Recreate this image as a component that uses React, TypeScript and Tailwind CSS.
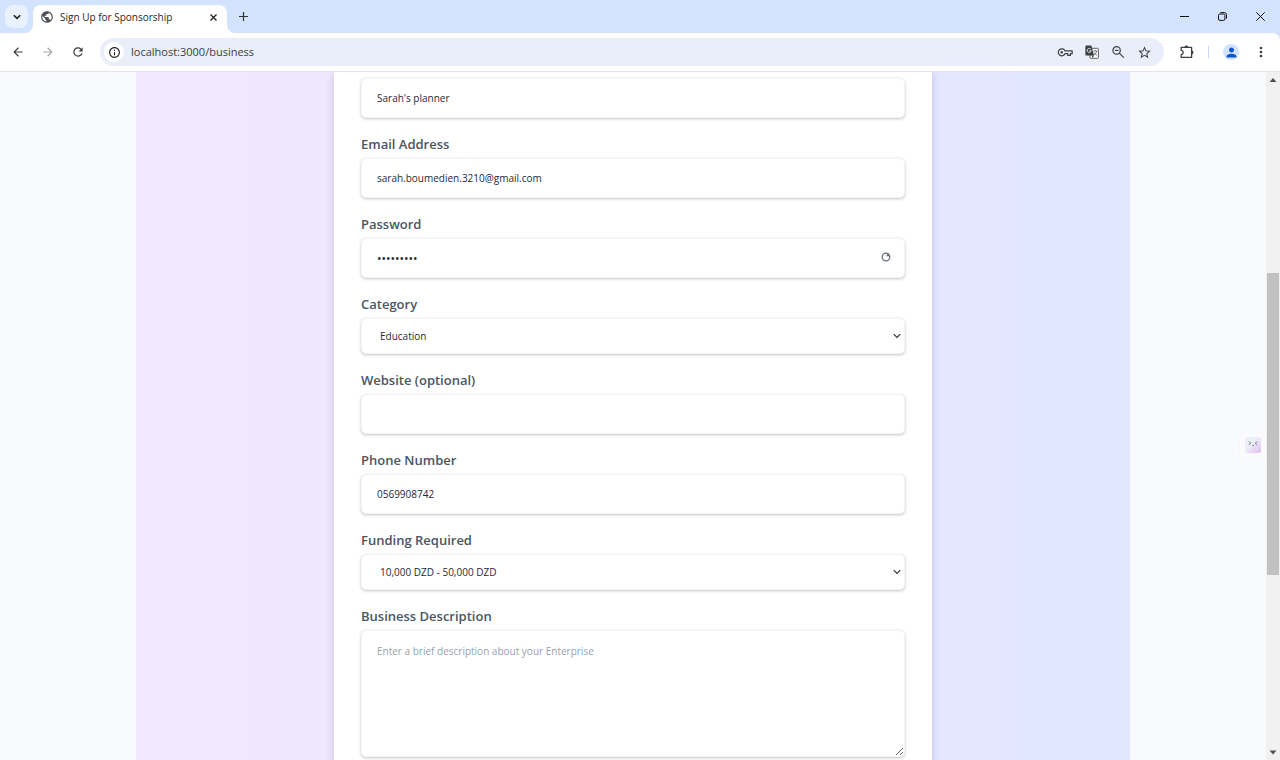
import { useState } from 'react';
import type { ReactNode } from 'react';
import { MdPublic, MdStarOutline, MdPerson, MdRefresh, MdArrowBack, MdArrowForward, MdMoreVert, MdInfoOutline } from 'react-icons/md';

const fieldClass =
  'block w-full rounded-[5px] border border-gray-100 bg-white text-gray-800 shadow-[0_1px_3px_rgba(0,0,0,0.24)] outline-none';

const fundingOptions = ['10,000 DZD - 50,000 DZD', '50,000 DZD - 100,000 DZD', 'Over 100,000 DZD'];
const categories = ['Education', 'Technology', 'Health', 'Arts'];

function Field({ id, label, children }: { id: string; label: string; children: ReactNode }) {
  return (
    <div className="mb-4">
      <label htmlFor={id} className="mb-1 block text-[13px] leading-5 font-semibold text-gray-600">
        {label}
      </label>
      {children}
    </div>
  );
}

function SelectBox({ id, value, options, onChange }: { id: string; value: string; options: string[]; onChange: (v: string) => void }) {
  return (
    <div className="relative">
      <select id={id} value={value} onChange={(e) => onChange(e.target.value)} className={`${fieldClass} h-9 appearance-none px-[18px] text-[10px]`}>
        {options.map((o) => (
          <option key={o}>{o}</option>
        ))}
      </select>
      <svg className="pointer-events-none absolute top-3.5 right-1 h-2 w-2" viewBox="0 0 8 8" fill="none" stroke="#333" strokeWidth="1.2">
        <path d="M0.7 2.2 4 5.5 7.3 2.2" />
      </svg>
    </div>
  );
}

function TitleBar() {
  return (
    <div className="flex h-[33px] shrink-0 items-stretch bg-[#d3e3fd] pl-[5px]">
      <button aria-label="Search tabs" className="mt-[5px] flex h-[23px] w-[23px] items-center justify-center rounded-lg bg-[#e9f1fe]">
        <svg className="h-2 w-2" viewBox="0 0 8 8" fill="none" stroke="#1f1f1f" strokeWidth="1.6">
          <path d="M0.8 2.3 4 5.4 7.2 2.3" />
        </svg>
      </button>
      <div className="relative mt-[5px] ml-[5px] flex w-[194px] items-center rounded-t-lg bg-white pr-1.5 pb-1 pl-[7px]">
        <svg className="absolute bottom-0 -left-2 h-2 w-2" viewBox="0 0 8 8" fill="#fff"><path d="M8 0V8H0A8 8 0 0 0 8 0Z" /></svg>
        <svg className="absolute -right-2 bottom-0 h-2 w-2" viewBox="0 0 8 8" fill="#fff"><path d="M0 0V8H8A8 8 0 0 1 0 0Z" /></svg>
        <MdPublic className="h-[14px] w-[14px] text-[#4d5156]" />
        <span className="ml-1.5 flex-1 text-[10px] whitespace-nowrap text-[#1f1f1f]">Sign Up for Sponsorship</span>
        <button aria-label="Close tab" className="flex h-4 w-4 items-center justify-center">
          <svg className="h-[7px] w-[7px]" viewBox="0 0 7 7" stroke="#1f1f1f" strokeWidth="1.3">
            <path d="M0.5 0.5 6.5 6.5M6.5 0.5 0.5 6.5" />
          </svg>
        </button>
      </div>
      <button aria-label="New tab" className="ml-1.5 flex w-5 items-center justify-center">
        <svg className="h-[9px] w-[9px]" viewBox="0 0 9 9" stroke="#333" strokeWidth="1.2">
          <path d="M4.5 0V9M0 4.5H9" />
        </svg>
      </button>
      <div className="ml-auto flex">
        <button aria-label="Minimize" className="flex w-[38px] items-center justify-center">
          <svg className="h-[9px] w-[9px]" viewBox="0 0 9 9" stroke="#111">
            <path d="M0 4.5H9" />
          </svg>
        </button>
        <button aria-label="Restore" className="flex w-[38px] items-center justify-center">
          <svg className="h-[9px] w-[9px]" viewBox="0 0 9 9" fill="none" stroke="#111">
            <rect x="0.5" y="2" width="6.4" height="6.4" rx="1.4" />
            <path d="M2.4 0.6H6.4Q8.5 0.6 8.5 2.7V6.6" />
          </svg>
        </button>
        <button aria-label="Close" className="flex w-[39px] items-center justify-center">
          <svg className="h-[9px] w-[9px]" viewBox="0 0 9 9" stroke="#111">
            <path d="M0.3 0.3 8.7 8.7M8.7 0.3 0.3 8.7" />
          </svg>
        </button>
      </div>
    </div>
  );
}

function Toolbar() {
  return (
    <div className="bg-[#d3e3fd]">
      <div className="flex h-[39px] items-center rounded-tr-lg border-b border-[#e6e4e4] bg-white px-[11px] text-[#3c4043]">
        <button aria-label="Back" className="mr-4"><MdArrowBack className="h-[14px] w-[14px]" /></button>
        <button aria-label="Forward" className="mr-4 text-[#a5a7aa]"><MdArrowForward className="h-[14px] w-[14px]" /></button>
        <button aria-label="Reload"><MdRefresh className="h-[14px] w-[14px]" /></button>
        <div className="ml-[15px] flex h-7 flex-1 items-center rounded-full bg-[#e9eef8] pr-3 pl-1">
          <span className="flex h-5 w-5 items-center justify-center rounded-full bg-white">
            <MdInfoOutline className="h-[13px] w-[13px] text-[#1f1f1f]" />
          </span>
          <input aria-label="Address" defaultValue="localhost:3000/business" className="ml-[7px] flex-1 bg-transparent text-[11px] text-[#3c4043] outline-none" />
          <div className="flex items-center gap-3">
            <button aria-label="Passwords">
              <svg className="h-[14px] w-4" viewBox="0 0 16 14" fill="none" stroke="#3c4043" strokeWidth="1.2">
                <path d="M8 5.9A3.5 3.5 0 1 0 8 8.7H10.8V10.4H13.4V8.7H15.2V5.9Z" strokeLinejoin="round" />
                <circle cx="4.7" cy="7.3" r="1.2" fill="#3c4043" stroke="none" />
              </svg>
            </button>
            <button aria-label="Translate">
              <svg className="h-[14px] w-[14px]" viewBox="0 0 14 14" fill="none">
                <rect x="5" y="3.3" width="8.4" height="10" rx="0.8" fill="#fff" stroke="#5f6368" />
                <path d="M8.4 6H12.4M10.4 5V6M11.8 6Q11 9 8.8 10.4M9 7.4Q10 9.4 12 10.4" stroke="#5f6368" strokeWidth="0.8" />
                <path d="M1.300 0.500H6.400L9 10.600H1.300Q0.400 10.600 0.400 9.700V1.400Q0.400 0.500 1.300 0.500Z" fill="#3c4043" />
                <path d="M5.900 4.300A2 2 0 1 0 6.200 5.800H4.400" stroke="#fff" strokeWidth="0.9" />
                <path d="M6.500 10.600H9L7.800 13Z" fill="#3c4043" />
              </svg>
            </button>
            <button aria-label="Zoom">
              <svg className="h-[14px] w-[14px]" viewBox="0 0 14 14" fill="none" stroke="#3c4043" strokeWidth="1.2">
                <circle cx="5.6" cy="5.4" r="3.7" />
                <path d="M8.3 8.1 12.8 12.6M3.8 5.4H7.4" />
              </svg>
            </button>
            <button aria-label="Bookmark"><MdStarOutline className="h-[15px] w-[15px]" /></button>
          </div>
        </div>
        <button aria-label="Extensions" className="ml-4">
          <svg className="h-[14px] w-[14px]" viewBox="0 0 14 14" fill="none" stroke="#3c4043" strokeWidth="1.3" strokeLinejoin="round">
            <path d="M1.2 2.4H11.6V12.4H1.2V9.6Q3.2 9.2 3.2 7.4T1.2 5.2Z" />
            <path d="M5.2 2A1.3 1.3 0 0 1 7.6 2ZM12 6.2A1.3 1.3 0 0 1 12 8.6Z" fill="#3c4043" />
          </svg>
        </button>
        <span className="mx-[14px] h-3 w-px bg-[#c6d8f8]" />
        <button aria-label="Profile" className="flex h-4 w-4 items-center justify-center rounded-full bg-[#d3e3fd]">
          <MdPerson className="h-[15px] w-[15px] text-[#0b57d0]" />
        </button>
        <button aria-label="Menu" className="ml-[14px]"><MdMoreVert className="h-4 w-4" /></button>
      </div>
    </div>
  );
}

function Scrollbar() {
  return (
    <div className="flex w-[14px] shrink-0 flex-col items-center bg-[#f1f1f1]">
      <svg className="h-4 w-2" viewBox="0 0 8 16" fill="#505050"><path d="M0.5 10 4 6 7.5 10Z" /></svg>
      <div className="flex-[185]" />
      <div className="w-3 flex-[302] bg-[#c1c1c1]" />
      <div className="flex-[169]" />
      <svg className="h-4 w-2" viewBox="0 0 8 16" fill="#505050"><path d="M0.5 6.5 4 10.5 7.5 6.5Z" /></svg>
    </div>
  );
}

export default function App() {
  const [form, setForm] = useState({
    name: "Sarah's planner",
    email: 'sarah.boumedien.3210@gmail.com',
    password: 'planner12',
    category: 'Education',
    website: '',
    phone: '0569908742',
    funding: '10,000 DZD - 50,000 DZD',
    description: '',
  });
  const update = (key: string, value: string) => setForm({ ...form, [key]: value });

  return (
    <div className="flex h-screen flex-col overflow-hidden font-['Open_Sans','Noto_Sans',sans-serif]">
      <TitleBar />
      <Toolbar />
      <div className="relative flex min-h-0 flex-1">
        <main className="flex flex-1 justify-center overflow-hidden bg-[#f8fafb]">
          <div className="flex w-full max-w-[994px] justify-center bg-gradient-to-r from-purple-100 to-indigo-100">
            <form className="h-max min-h-full w-full max-w-[598px] bg-white px-[27px] pt-1.5 pb-8 shadow-[0_2px_8px_rgba(60,50,120,0.22)]">
              <div className="mb-4">
                <input aria-label="Business Name" value={form.name} onChange={(e) => update('name', e.target.value)} className={`${fieldClass} h-10 px-[15px] text-[10px]`} />
              </div>
              <Field id="email" label="Email Address">
                <input id="email" type="email" value={form.email} onChange={(e) => update('email', e.target.value)} className={`${fieldClass} h-10 px-[15px] text-[10px]`} />
              </Field>
              <Field id="password" label="Password">
                <div className="relative">
                  <input id="password" type="password" value={form.password} onChange={(e) => update('password', e.target.value)} className={`${fieldClass} h-10 px-[15px] text-xs`} />
                  <button type="button" aria-label="Show password" className="absolute top-3.5 right-3.5">
                    <svg className="h-[10px] w-[10px]" viewBox="0 0 10 10" fill="none" stroke="#6b7280" strokeWidth="1.3">
                      <circle cx="5" cy="5" r="3.8" />
                      <circle cx="6.9" cy="3.3" r="1.2" fill="#6b7280" stroke="none" />
                    </svg>
                  </button>
                </div>
              </Field>
              <Field id="category" label="Category">
                <SelectBox id="category" value={form.category} options={categories} onChange={(v) => update('category', v)} />
              </Field>
              <Field id="website" label="Website (optional)">
                <input id="website" type="url" value={form.website} onChange={(e) => update('website', e.target.value)} className={`${fieldClass} h-10 px-[15px] text-[10px]`} />
              </Field>
              <Field id="phone" label="Phone Number">
                <input id="phone" type="tel" value={form.phone} onChange={(e) => update('phone', e.target.value)} className={`${fieldClass} h-10 px-[15px] text-[10px]`} />
              </Field>
              <Field id="funding" label="Funding Required">
                <SelectBox id="funding" value={form.funding} options={fundingOptions} onChange={(v) => update('funding', v)} />
              </Field>
              <Field id="description" label="Business Description">
                <textarea
                  id="description"
                  rows={6}
                  placeholder="Enter a brief description about your Enterprise"
                  value={form.description}
                  onChange={(e) => update('description', e.target.value)}
                  className={`${fieldClass} h-[127px] resize-y px-[15px] py-3 text-[10px] leading-4 placeholder:text-gray-400`}
                />
              </Field>
            </form>
          </div>
        </main>
        <Scrollbar />
        <button aria-label="Assistant" className="absolute top-[361px] right-[14px] flex h-6 w-[26px] items-center justify-center rounded-l bg-[#fbfbfd] shadow-[0_0_2px_rgba(0,0,0,0.06)]">
          <svg className="h-4 w-4" viewBox="0 0 16 16" fill="none">
            <defs>
              <linearGradient id="face" x1="0" y1="0" x2="1" y2="1">
                <stop offset="0.4" stopColor="#edf0f8" />
                <stop offset="1" stopColor="#dfbcf2" />
              </linearGradient>
            </defs>
            <rect width="16" height="16" rx="2" fill="url(#face)" />
            <path d="M3.5 4.5 6 6.3 3.5 8M12.5 4.5 10 6.3 12.5 8M7 8.5H9" stroke="#858a9c" />
          </svg>
        </button>
      </div>
    </div>
  );
}
